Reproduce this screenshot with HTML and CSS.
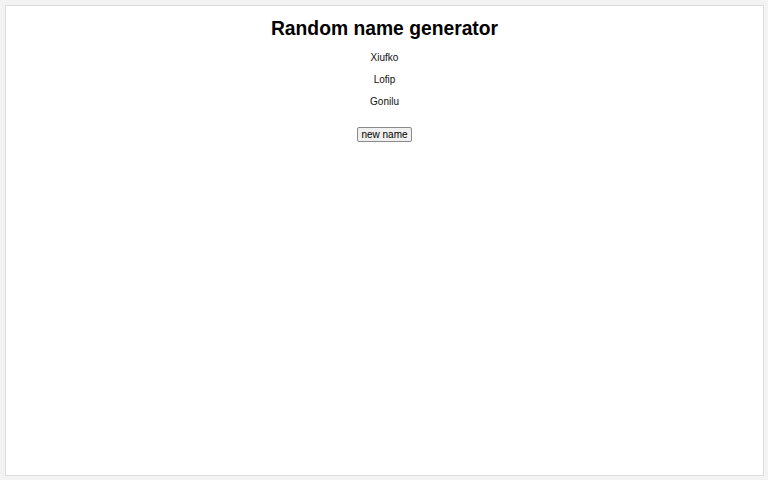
FILE: index.html
```html
<!DOCTYPE html>
<html lang="en">
<head>
    <meta charset="UTF-8">
    <title>Random name generator</title>
    <link rel="stylesheet" href="styles.css">
</head>
<body>
    <div class="panel">
        <h1>Random name generator</h1>
        <ul class="names">
            <li>Xiufko</li>
            <li>Lofip</li>
            <li>Gonilu</li>
        </ul>
        <button class="new-name">new name</button>
    </div>
</body>
</html>
```

FILE: styles.css
```css
* {
    margin: 0;
    padding: 0;
    box-sizing: border-box;
}

body {
    font-family: 'Liberation Sans', Arial, sans-serif;
    background: #f3f3f3;
    padding: 5px 4px 4px 5px;
    height: 100vh;
}

.panel {
    background: #fff;
    border: 1px solid #dcdcdc;
    height: 471px;
    text-align: center;
    padding-top: 11px;
}

h1 {
    font-size: 19.3px;
    font-weight: bold;
    color: #000;
    line-height: 24px;
}

.names {
    list-style: none;
    font-size: 10px;
    color: #111;
    margin-top: 11px;
}

.names li {
    line-height: 12px;
    margin-bottom: 10px;
}

.new-name {
    margin-top: 9px;
    font-family: 'Liberation Sans', Arial, sans-serif;
    font-size: 10px;
    padding: 1px 3px;
    border: 1px solid #8a8a8a;
    border-radius: 2px;
    background: #f0f0f0;
    color: #000;
}
```
